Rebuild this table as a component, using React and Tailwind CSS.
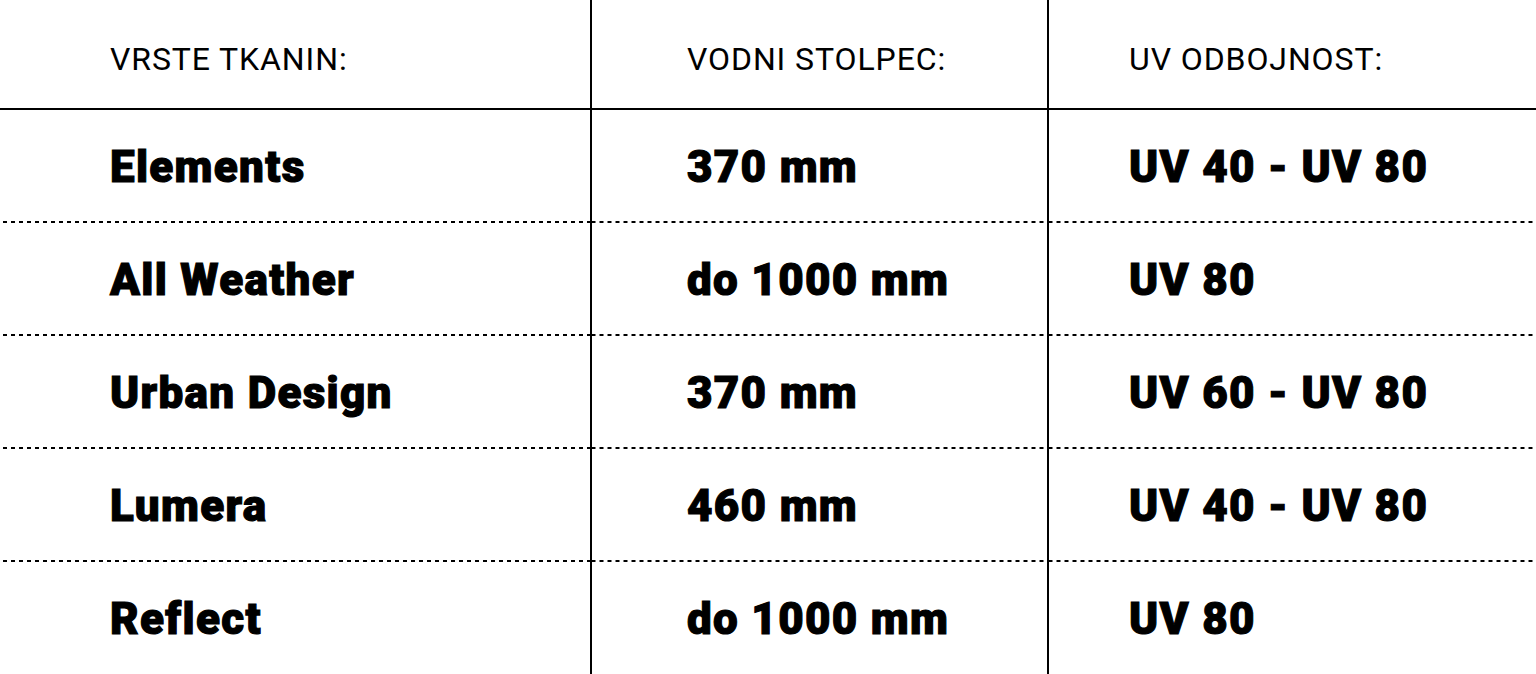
import React from "react";

const rows = [
  ["Elements", "370 mm", "UV 40 - UV 80"],
  ["All Weather", "do 1000 mm", "UV 80"],
  ["Urban Design", "370 mm", "UV 60 - UV 80"],
  ["Lumera", "460 mm", "UV 40 - UV 80"],
  ["Reflect", "do 1000 mm", "UV 80"],
];

const headers = ["VRSTE TKANIN:", "VODNI STOLPEC:", "UV ODBOJNOST:"];

const colClasses = [
  "w-[592px] border-r-2 border-black",
  "w-[457px] border-r-2 border-black",
  "flex-1",
];
const padClasses = ["pl-[110px]", "pl-[95px]", "pl-[80px]"];

export default function App() {
  return (
    <div
      className="w-[1536px] h-[674px] bg-white text-black flex overflow-hidden"
      style={{ fontFamily: "Roboto, 'Liberation Sans', sans-serif" }}
    >
      {headers.map((h, ci) => (
        <div key={ci} className={`flex flex-col ${colClasses[ci]}`}>
          <div
            className={`h-[110px] shrink-0 border-b-2 border-black flex items-center pt-[9px] ${padClasses[ci]} text-[32px] font-normal tracking-[0.9px]`}
          >
            {h}
          </div>
          {rows.map((r, ri) => (
            <div
              key={ri}
              className={`h-[113px] shrink-0 flex items-center ${padClasses[ci]} text-[44px] font-black tracking-[1.3px] [-webkit-text-stroke:1.1px_black] ${
                ri < rows.length - 1
                  ? "bg-[linear-gradient(to_right,black_55%,transparent_55%)] bg-[length:8px_2px] bg-bottom bg-repeat-x"
                  : ""
              }`}
            >
              {r[ci]}
            </div>
          ))}
        </div>
      ))}
    </div>
  );
}
